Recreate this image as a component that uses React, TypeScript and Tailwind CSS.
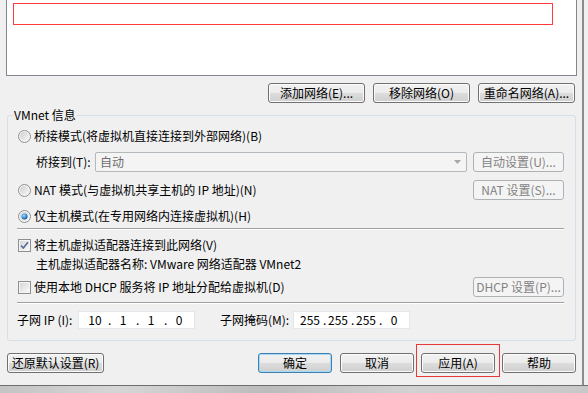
import * as React from 'react';

/**
 * VMware virtual network editor – lower half of the dialog
 */

const BTN_BASE =
    'flex h-[20px] shrink-0 items-center justify-center rounded-[3px] border text-[12px] leading-[14px]';
const BTN_NORMAL =
    'border-[#707070] bg-[linear-gradient(#f2f2f2,#ebebeb_50%,#dddddd_50%,#cfcfcf)] shadow-[inset_0_0_0_1px_#fbfbfb] text-black';
const BTN_PRIMARY =
    'border-[#3c7fb1] bg-[linear-gradient(#f2f2f2,#ebebeb_50%,#dddddd_50%,#cfcfcf)] shadow-[inset_0_0_0_1px_#a6d9f7] text-black';
const BTN_DISABLED = 'border-[#adb2b5] bg-[#f4f4f4] text-[#838383]';

function Btn({
    children,
    width,
    variant = 'normal',
}: {
    children: React.ReactNode;
    width: string;
    variant?: 'normal' | 'primary' | 'disabled';
}) {
    const look = variant === 'primary' ? BTN_PRIMARY : variant === 'disabled' ? BTN_DISABLED : BTN_NORMAL;
    return <div className={`${BTN_BASE} ${look} ${width}`}>{children}</div>;
}

function Radio({ checked = false, id }: { checked?: boolean; id: string }) {
    return (
        <svg width="13" height="13" viewBox="0 0 13 13" className="shrink-0">
            <defs>
                <linearGradient id={`rg-${id}`} x1="0" y1="0" x2="1" y2="1">
                    <stop offset="0" stopColor="#cfcfcf" />
                    <stop offset="1" stopColor="#f7f7f7" />
                </linearGradient>
                <radialGradient id={`rd-${id}`} cx="0.4" cy="0.35" r="0.7">
                    <stop offset="0" stopColor="#a9e0fb" />
                    <stop offset="0.55" stopColor="#3a8fd8" />
                    <stop offset="1" stopColor="#124a8c" />
                </radialGradient>
            </defs>
            <circle cx="6.5" cy="6.5" r="6" fill="#f4f4f4" stroke="#8f8f8f" />
            <circle cx="6.5" cy="6.5" r="4.5" fill={`url(#rg-${id})`} />
            {checked && <circle cx="6.5" cy="6.5" r="3" fill={`url(#rd-${id})`} />}
        </svg>
    );
}

function Check({ checked = false, id }: { checked?: boolean; id: string }) {
    return (
        <svg width="13" height="13" viewBox="0 0 13 13" className="shrink-0">
            <defs>
                <linearGradient id={`cg-${id}`} x1="0" y1="0" x2="1" y2="1">
                    <stop offset="0" stopColor="#d6d6d6" />
                    <stop offset="1" stopColor="#f8f8f8" />
                </linearGradient>
            </defs>
            <rect x="0.5" y="0.5" width="12" height="12" fill="#f4f4f4" stroke="#8e8f8f" />
            <rect x="2" y="2" width="9" height="9" fill={`url(#cg-${id})`} />
            {checked && (
                <path d="M3 6.5 L5.3 9 L10 3.3" fill="none" stroke="#5b70a0" strokeWidth="1.8" />
            )}
        </svg>
    );
}

function IpBox({ parts }: { parts: string[] }) {
    return (
        <div className="flex h-[18px] w-[117px] shrink-0 items-center border border-[#e3e6ea] bg-white pl-[5px]">
            {parts.map((p, i) => (
                <React.Fragment key={i}>
                    {i > 0 && <span className="w-[6px] pl-[2px]">.</span>}
                    <span className="w-[22px] text-center">{p}</span>
                </React.Fragment>
            ))}
        </div>
    );
}

function Separator() {
    return <div className="-ml-[1px] h-[2px] border-t border-b border-t-[#a0a0a0] border-b-white" />;
}

export default function App() {
    return (
        <div className="flex h-[393px] w-[588px] flex-col overflow-hidden bg-[#f0f0f0] font-['Noto_Sans_CJK_SC',sans-serif] text-[12px] leading-[14px] text-black">
            <div className="flex h-[385px] shrink-0">
                <div className="flex w-[582px] flex-col pl-[6px]">
                    {/* network list */}
                    <div className="h-[76px] w-[571px] border-x border-b border-[#828790] bg-white pt-[3px] pl-[6px]">
                        <div className="h-[22px] w-[540px] border border-[#ff3b3b]" />
                    </div>

                    <div className="mt-[7px] flex w-[571px] justify-end gap-[8px] pr-[2px]">
                        <Btn width="w-[97px]">添加网络(E)...</Btn>
                        <Btn width="w-[97px]">移除网络(O)</Btn>
                        <Btn width="w-[97px]">重命名网络(A)...</Btn>
                    </div>

                    {/* VMnet info group */}
                    <fieldset className="mt-[5px] ml-[1px] w-[569px] rounded-[3px] border border-[#d5dfe5] p-0">
                        <legend className="ml-[5px] px-[1px] leading-[14px]">VMnet 信息</legend>
                        <div className="flex flex-col pt-[4px] pr-[11px] pb-[11px] pl-[10px]">
                            <div className="flex h-[20px] items-center">
                                <Radio id="r1" />
                                <span className="ml-[3px]">桥接模式(将虚拟机直接连接到外部网络)(B)</span>
                            </div>
                            <div className="mt-[6px] flex h-[20px] items-center">
                                <span className="ml-[18px] w-[59px] shrink-0">桥接到(T):</span>
                                <div className="flex h-[20px] flex-1 items-center rounded-[2px] border border-[#b3b8bc] bg-[#f4f4f4] pr-[5px] pl-[4px] text-[#6d6d6d]">
                                    <span className="flex-1">自动</span>
                                    <svg width="7" height="4" viewBox="0 0 7 4">
                                        <path d="M0 0 H7 L3.5 4 Z" fill="#a8a8a8" />
                                    </svg>
                                </div>
                                <div className="ml-[6px]">
                                    <Btn width="w-[91px]" variant="disabled">自动设置(U)...</Btn>
                                </div>
                            </div>
                            <div className="mt-[8px] flex h-[20px] items-center">
                                <Radio id="r2" />
                                <span className="ml-[3px]">NAT 模式(与虚拟机共享主机的 IP 地址)(N)</span>
                                <div className="ml-auto">
                                    <Btn width="w-[91px]" variant="disabled">NAT 设置(S)...</Btn>
                                </div>
                            </div>
                            <div className="mt-[6px] flex h-[20px] items-center">
                                <Radio id="r3" checked />
                                <span className="ml-[3px]">仅主机模式(在专用网络内连接虚拟机)(H)</span>
                            </div>

                            <div className="mt-[2px]">
                                <Separator />
                            </div>

                            <div className="mt-[6px] flex h-[18px] items-center">
                                <Check id="c1" checked />
                                <span className="ml-[3px]">将主机虚拟适配器连接到此网络(V)</span>
                            </div>
                            <div className="mt-[1px] flex h-[18px] items-center pl-[18px]">
                                主机虚拟适配器名称: VMware 网络适配器 VMnet2
                            </div>
                            <div className="mt-[4px] flex h-[20px] items-center">
                                <Check id="c2" />
                                <span className="ml-[3px]">使用本地 DHCP 服务将 IP 地址分配给虚拟机(D)</span>
                                <div className="ml-auto">
                                    <Btn width="w-[91px]" variant="disabled">DHCP 设置(P)...</Btn>
                                </div>
                            </div>

                            <div className="mt-[5px]">
                                <Separator />
                            </div>

                            <div className="mt-[7px] flex h-[18px] items-center">
                                <span className="-ml-[1px] w-[61px] shrink-0">子网 IP (I):</span>
                                <IpBox parts={['10', '1', '1', '0']} />
                                <span className="ml-[25px] w-[73px] shrink-0">子网掩码(M):</span>
                                <IpBox parts={['255', '255', '255', '0']} />
                            </div>
                        </div>
                    </fieldset>

                    {/* dialog buttons */}
                    <div className="mt-[12px] flex w-[571px] items-center pr-[1px]">
                        <div className="ml-[1px]">
                            <Btn width="w-[97px]">还原默认设置(R)</Btn>
                        </div>
                        <div className="ml-auto">
                            <Btn width="w-[74px]" variant="primary">确定</Btn>
                        </div>
                        <div className="ml-[8px]">
                            <Btn width="w-[74px]">取消</Btn>
                        </div>
                        <div className="relative ml-[7px]">
                            <Btn width="w-[74px]">应用(A)</Btn>
                            <div className="absolute -top-[9px] -right-[5px] -bottom-[4px] -left-[5px] border border-[#e8393a]" />
                        </div>
                        <div className="ml-[7px]">
                            <Btn width="w-[74px]">帮助</Btn>
                        </div>
                    </div>
                </div>
                <div className="w-[2px] bg-[#8c8c8c]" />
            </div>
            <div className="h-[8px] border-t border-[#6e6e6e] bg-[linear-gradient(90deg,#c4c4c4,#d6d6d6_20%,#bcbcbc_45%,#d2d2d2_70%,#c8c8c8)]" />
        </div>
    );
}
